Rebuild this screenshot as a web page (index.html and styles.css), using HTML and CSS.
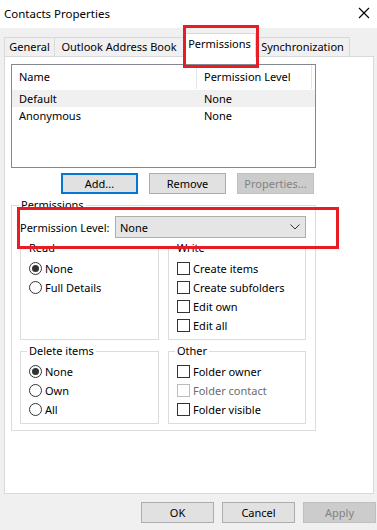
FILE: index.html
```html
<!DOCTYPE html>
<html lang="en">
<head>
    <meta charset="UTF-8">
    <meta name="viewport" content="width=device-width, initial-scale=1.0">
    <title>Contacts Properties</title>
    <link rel="stylesheet" href="styles.css">
</head>
<body>

    <div class="window">

        <!-- Title bar -->
        <div class="titlebar">
            <span class="title">Contacts Properties</span>
            <svg class="close" width="12" height="12" viewBox="0 0 12 12">
                <path d="M1 1 L11 11 M11 1 L1 11" stroke="#000" stroke-width="1.1" fill="none"/>
            </svg>
        </div>

        <!-- Tabs -->
        <div class="tabs">
            <div class="tab tab-general">General</div>
            <div class="tab tab-oab">Outlook Address Book</div>
            <div class="tab tab-perm active">Permissions</div>
            <div class="tab tab-sync">Synchronization</div>
        </div>

        <div class="panel">

            <!-- Users list -->
            <div class="listbox">
                <div class="list-head">
                    <div class="col-name">Name</div>
                    <div class="col-level">Permission Level</div>
                    <div class="col-rest"></div>
                </div>
                <div class="list-row selected">
                    <div class="col-name">Default</div>
                    <div class="col-level">None</div>
                </div>
                <div class="list-row">
                    <div class="col-name">Anonymous</div>
                    <div class="col-level">None</div>
                </div>
            </div>

            <div class="list-buttons">
                <button class="btn btn-default">Add...</button>
                <button class="btn">Remove</button>
                <button class="btn" disabled>Properties...</button>
            </div>

            <!-- Permissions group -->
            <fieldset class="group perms">
                <legend>Permissions</legend>

                <div class="level-row">
                    <label>Permission Level:</label>
                    <div class="select">
                        <span>None</span>
                        <svg width="10" height="6" viewBox="0 0 10 6">
                            <path d="M0.5 0.5 L5 5 L9.5 0.5" stroke="#333" stroke-width="1" fill="none"/>
                        </svg>
                    </div>
                </div>

                <div class="subgroups">
                    <fieldset class="group sub">
                        <legend>Read</legend>
                        <div class="opt"><span class="radio checked"></span>None</div>
                        <div class="opt"><span class="radio"></span>Full Details</div>
                    </fieldset>
                    <fieldset class="group sub">
                        <legend>Write</legend>
                        <div class="opt"><span class="check"></span>Create items</div>
                        <div class="opt"><span class="check"></span>Create subfolders</div>
                        <div class="opt"><span class="check"></span>Edit own</div>
                        <div class="opt"><span class="check"></span>Edit all</div>
                    </fieldset>
                    <fieldset class="group sub">
                        <legend>Delete items</legend>
                        <div class="opt"><span class="radio checked"></span>None</div>
                        <div class="opt"><span class="radio"></span>Own</div>
                        <div class="opt"><span class="radio"></span>All</div>
                    </fieldset>
                    <fieldset class="group sub">
                        <legend>Other</legend>
                        <div class="opt"><span class="check"></span>Folder owner</div>
                        <div class="opt disabled"><span class="check"></span>Folder contact</div>
                        <div class="opt"><span class="check"></span>Folder visible</div>
                    </fieldset>
                </div>
            </fieldset>
        </div>

        <!-- Dialog buttons -->
        <div class="footer">
            <button class="btn btn-wide">OK</button>
            <button class="btn btn-wide">Cancel</button>
            <button class="btn btn-wide" disabled>Apply</button>
        </div>

        <!-- Red annotation boxes -->
        <div class="highlight hl-tab"></div>
        <div class="highlight hl-level"></div>
    </div>

</body>
</html>
```

FILE: styles.css
```css
body {
    margin: 0;
    font-family: "Noto Sans", sans-serif;
    font-size: 11px;
    color: #000;
}
.window {
    position: relative;
    width: 377px;
    height: 530px;
    background-color: #f0f0f0;
    overflow: hidden;
}
.titlebar {
    height: 28px;
    background-color: #fff;
    display: flex;
    align-items: center;
    justify-content: space-between;
    padding: 0 4px 2px 4px;
    box-sizing: border-box;
}
.title {
    font-size: 11.5px;
}
.close {
    margin-right: 3px;
}
.tabs {
    display: flex;
    align-items: flex-end;
    height: 29px;
    padding-left: 4px;
    margin-bottom: -1px;
    position: relative;
    z-index: 1;
}
.tab {
    box-sizing: border-box;
    height: 19px;
    margin-bottom: 1px;
    margin-right: -1px;
    border: 1px solid #d9d9d9;
    border-bottom: none;
    text-align: center;
    line-height: 18px;
}
.tab-general {
    width: 51px;
}
.tab-oab {
    width: 130px;
}
.tab-perm {
    width: 73px;
}
.tab-sync {
    width: 95px;
}
.tab.active {
    height: 24px;
    margin-bottom: 0;
    background-color: #fff;
    line-height: 20px;
    position: relative;
    z-index: 1;
}
.panel {
    box-sizing: border-box;
    height: 438px;
    margin: 0 3px 0 4px;
    padding: 7px 6px;
    background-color: #fff;
    border: 1px solid #d9d9d9;
}
.listbox {
    box-sizing: border-box;
    width: 305px;
    height: 104px;
    border: 1px solid #828790;
}
.list-head,
.list-row {
    display: flex;
}
.list-head {
    height: 24px;
    line-height: 24px;
    margin-bottom: 1px;
}
.list-row {
    height: 17px;
    line-height: 17px;
}
.list-row.selected {
    background-color: #f0f0f0;
}
.col-name {
    width: 185px;
    padding-left: 7px;
    box-sizing: border-box;
}
.col-level {
    width: 115px;
    padding-left: 7px;
    box-sizing: border-box;
}
.list-head .col-name,
.list-head .col-level {
    border-right: 1px solid #e5e5e5;
}
.list-buttons {
    display: flex;
    justify-content: flex-end;
    gap: 11px;
    width: 303px;
    margin-top: 5px;
}
.btn {
    box-sizing: border-box;
    width: 77px;
    height: 21px;
    padding: 0;
    font-family: inherit;
    font-size: 11px;
    color: #000;
    background-color: #e1e1e1;
    border: 1px solid #adadad;
}
.btn-default {
    border: 2px solid #0078d7;
}
.btn:disabled {
    color: #838383;
    background-color: #cccccc;
    border-color: #bfbfbf;
}
.btn-wide {
    width: 73px;
}
.group {
    margin: 0;
    border: 1px solid #dcdcdc;
    min-width: 0;
}
.group legend {
    padding: 0 2px;
    line-height: 16px;
}
.perms {
    box-sizing: border-box;
    width: 305px;
    margin-top: 3px;
    padding: 3px 9px 6px 8px;
}
.perms > legend {
    margin-left: -1px;
}
.level-row {
    display: flex;
    align-items: center;
    height: 22px;
    margin-bottom: 2px;
}
.level-row label {
    width: 95px;
}
.select {
    box-sizing: border-box;
    flex: 1;
    height: 22px;
    display: flex;
    align-items: center;
    justify-content: space-between;
    padding: 0 5px 0 4px;
    background-color: #e5e5e5;
    border: 1px solid #adadad;
}
.subgroups {
    display: grid;
    grid-template-columns: 139px 138px;
    column-gap: 9px;
    row-gap: 3px;
}
.sub {
    padding: 3px 4px 4px 8px;
}
.sub legend {
    margin-left: -2px;
}
.opt {
    display: flex;
    align-items: center;
    gap: 3px;
    height: 19px;
}
.opt.disabled {
    color: #6d6d6d;
}
.radio,
.check {
    box-sizing: border-box;
    width: 13px;
    height: 13px;
    border: 1px solid #333;
    background-color: #fff;
    flex-shrink: 0;
}
.radio {
    border-radius: 50%;
    display: flex;
    align-items: center;
    justify-content: center;
}
.radio.checked::after {
    content: "";
    width: 7px;
    height: 7px;
    border-radius: 50%;
    background-color: #333;
}
.opt.disabled .check {
    border-color: #bcbcbc;
}
.footer {
    display: flex;
    justify-content: flex-end;
    gap: 8px;
    padding: 8px 1px 0 0;
}
.highlight {
    position: absolute;
    box-sizing: border-box;
    border: 3px solid #e81c24;
    z-index: 5;
}
.hl-tab {
    left: 183px;
    top: 25px;
    width: 76px;
    height: 43px;
}
.hl-level {
    left: 17px;
    top: 207px;
    width: 322px;
    height: 42px;
}
```
